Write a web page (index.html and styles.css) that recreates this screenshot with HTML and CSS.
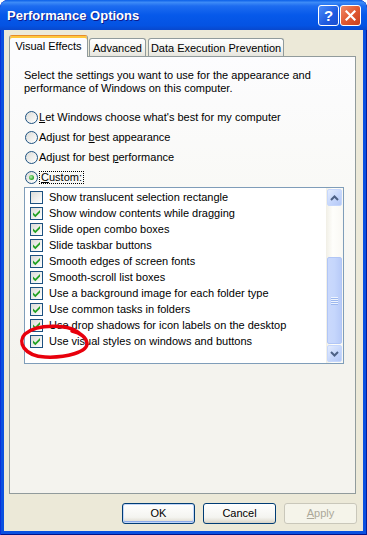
FILE: index.html
```html
<!DOCTYPE html>
<html lang="en">
<head>
    <meta charset="UTF-8">
    <title>Performance Options</title>
    <link rel="stylesheet" href="styles.css">
</head>
<body>
    <svg class="defs" width="0" height="0">
        <symbol id="chk" viewBox="0 0 11 11">
            <path d="M2 4.5 L4.3 6.8 L9 2.1 L9 4.5 L4.3 9.2 L2 6.9 Z" fill="#21A121"/>
        </symbol>
    </svg>
    <div class="window">
        <div class="titlebar">
            <span class="title">Performance Options</span>
            <div class="caption-buttons">
                <span class="cap-btn help">?</span>
                <span class="cap-btn close">
                    <svg width="11" height="11" viewBox="0 0 11 11">
                        <path d="M1.5 1.5 L9.5 9.5 M9.5 1.5 L1.5 9.5" stroke="#fff" stroke-width="2.2" stroke-linecap="square"/>
                    </svg>
                </span>
            </div>
        </div>
        <div class="client">
            <div class="tabs">
                <span class="tab active">Visual Effects</span>
                <span class="tab adv">Advanced</span>
                <span class="tab dep">Data Execution Prevention</span>
            </div>
            <div class="panel">
                <p class="intro">Select the settings you want to use for the appearance and<br>performance of Windows on this computer.</p>
                <div class="radios">
                    <div class="radio-row"><span class="radio"></span><span><u>L</u>et Windows choose what's best for my computer</span></div>
                    <div class="radio-row"><span class="radio"></span><span>Adjust for <u>b</u>est appearance</span></div>
                    <div class="radio-row"><span class="radio"></span><span>Adjust for best <u>p</u>erformance</span></div>
                    <div class="radio-row"><span class="radio on"></span><span class="focus"><u>C</u>ustom:</span></div>
                </div>
                <div class="listbox">
                    <ul class="items">
                        <li><span class="check"></span>Show translucent selection rectangle</li>
                        <li><span class="check"><svg><use href="#chk"/></svg></span>Show window contents while dragging</li>
                        <li><span class="check"><svg><use href="#chk"/></svg></span>Slide open combo boxes</li>
                        <li><span class="check"><svg><use href="#chk"/></svg></span>Slide taskbar buttons</li>
                        <li><span class="check"><svg><use href="#chk"/></svg></span>Smooth edges of screen fonts</li>
                        <li><span class="check"><svg><use href="#chk"/></svg></span>Smooth-scroll list boxes</li>
                        <li><span class="check"><svg><use href="#chk"/></svg></span>Use a background image for each folder type</li>
                        <li><span class="check"><svg><use href="#chk"/></svg></span>Use common tasks in folders</li>
                        <li><span class="check"><svg><use href="#chk"/></svg></span>Use drop shadows for icon labels on the desktop</li>
                        <li><span class="check"><svg><use href="#chk"/></svg></span>Use visual styles on windows and buttons</li>
                    </ul>
                    <div class="scrollbar">
                        <span class="sb-btn">
                            <svg width="9" height="6" viewBox="0 0 9 6"><path d="M1 5 L4.5 1.5 L8 5" fill="none" stroke="#4D6185" stroke-width="2"/></svg>
                        </span>
                        <span class="sb-space"></span>
                        <span class="sb-thumb"><span class="grip"></span></span>
                        <span class="sb-btn">
                            <svg width="9" height="6" viewBox="0 0 9 6"><path d="M1 1 L4.5 4.5 L8 1" fill="none" stroke="#4D6185" stroke-width="2"/></svg>
                        </span>
                    </div>
                </div>
            </div>
            <div class="buttons">
                <span class="btn default">OK</span>
                <span class="btn">Cancel</span>
                <span class="btn disabled"><u>A</u>pply</span>
            </div>
        </div>
        <!-- red marker drawn over the screenshot -->
        <svg class="scribble" width="367" height="535" viewBox="0 0 367 535">
            <path d="M81 335 C72 324, 38 323, 25 334 C17 342, 24 356, 45 357 C66 358, 88 352, 87 343 C86 337, 80 333, 72 331"
                  fill="none" stroke="#E8000C" stroke-width="3.5" stroke-linecap="round"/>
        </svg>
    </div>
</body>
</html>
```

FILE: styles.css
```css
* {
    box-sizing: border-box;
}

body {
    margin: 0;
    font-family: "Liberation Sans", Arial, sans-serif;
    font-size: 11px;
    line-height: 13px;
    color: #000;
    background: #fff;
}

svg.defs {
    position: absolute;
}

.window {
    position: relative;
    width: 367px;
    height: 535px;
    display: flex;
    flex-direction: column;
    background: #0A50E0;
    border-radius: 8px 8px 0 0;
    box-shadow: inset 1px 0 #0831D9, inset -1px 0 #001EA0, inset 0 -1px #00138C;
    overflow: hidden;
}

/* title bar */
.titlebar {
    height: 30px;
    flex: none;
    display: flex;
    align-items: center;
    padding: 0 6px 0 7px;
    border-radius: 8px 8px 0 0;
    background: linear-gradient(#0A5FE8 0%, #3D8BF7 8%, #1D6CF0 20%, #0659EA 50%, #0453E3 85%, #0848CD 100%);
}

.title {
    flex: 1;
    color: #fff;
    font-weight: bold;
    font-size: 13px;
    text-shadow: 1px 1px #0F1A8A;
}

.caption-buttons {
    display: flex;
    gap: 1px;
}

.cap-btn {
    width: 21px;
    height: 21px;
    border: 1px solid #fff;
    border-radius: 3px;
    display: flex;
    align-items: center;
    justify-content: center;
    color: #fff;
    font-weight: bold;
    font-size: 15px;
}

.cap-btn.help {
    background: linear-gradient(135deg, #4B8CF8, #1E5AE0 60%, #1B4FD0);
}

.cap-btn.close {
    background: linear-gradient(135deg, #F08A6A, #E15A32 50%, #C8401E);
}

/* client area */
.client {
    flex: 1;
    margin: 0 4px 4px;
    display: flex;
    flex-direction: column;
    background: #ECE9D8;
}

.tabs {
    height: 27px;
    flex: none;
    display: flex;
    align-items: flex-end;
    padding-left: 5px;
    margin-bottom: -1px;
    position: relative;
    z-index: 1;
}

.tab {
    height: 18px;
    margin-bottom: 1px;
    padding-top: 3px;
    border: 1px solid #919B9C;
    border-bottom: none;
    border-radius: 3px 3px 0 0;
    background: linear-gradient(#FFFFFF, #F3F3EF 60%, #E6E5DE);
    text-align: center;
}

.tab.active {
    width: 79px;
    height: 22px;
    margin-bottom: 0;
    padding-top: 4px;
    border-top-color: #E68B2C;
    box-shadow: inset 0 2px #FFC73C;
    background: #FCFCFE;
}

.tab.adv {
    width: 57px;
    margin-left: 1px;
}

.tab.dep {
    width: 136px;
    margin-left: 2px;
}

.panel {
    flex: 1;
    margin: 0 7px 0 5px;
    padding: 12px 11px 0 14px;
    border: 1px solid #919B9C;
    background: linear-gradient(#FCFCFE, #F9F9F6 30%, #F4F3EE 70%);
}

.intro {
    margin: 0;
}

.radios {
    margin-top: 12px;
}

.radio-row {
    height: 20px;
    display: flex;
    align-items: center;
    gap: 1px;
}

.radio {
    width: 13px;
    height: 13px;
    margin-left: 1px;
    border: 1px solid #1C5180;
    border-radius: 50%;
    background: linear-gradient(135deg, #DCDCD7, #FFFFFF);
    display: flex;
    align-items: center;
    justify-content: center;
}

.radio.on::after {
    content: "";
    width: 5px;
    height: 5px;
    border-radius: 50%;
    background: radial-gradient(circle at 40% 40%, #B8F0B0, #21A121 70%);
}

.focus {
    border: 1px dotted #000;
    line-height: 11px;
    padding: 0 1px;
}

/* list box */
.listbox {
    height: 177px;
    display: flex;
    border: 1px solid #7F9DB9;
    background: #fff;
}

.items {
    flex: 1;
    margin: 0;
    padding: 1px 0 0 5px;
    list-style: none;
}

.items li {
    height: 16px;
    display: flex;
    align-items: center;
    gap: 6px;
    white-space: nowrap;
}

.check {
    width: 13px;
    height: 13px;
    flex: none;
    border: 1px solid #1C5180;
    background: linear-gradient(135deg, #DCDCD7, #FFFFFF);
}

.check svg {
    display: block;
    width: 11px;
    height: 11px;
}

.scrollbar {
    width: 17px;
    display: flex;
    flex-direction: column;
    background: linear-gradient(90deg, #F1EFE6, #FEFEFB 40%, #F9F8F3);
}

.sb-btn {
    height: 17px;
    flex: none;
    margin: 1px;
    border: 1px solid #C6D7FC;
    border-radius: 2px;
    background: linear-gradient(135deg, #E3ECFE, #C4D5FB 60%, #B4C8F6);
    display: flex;
    align-items: center;
    justify-content: center;
}

.sb-space {
    flex: 1;
}

.sb-thumb {
    height: 87px;
    flex: none;
    margin: 0 1px;
    border: 1px solid #B1C6F6;
    border-radius: 2px;
    background: linear-gradient(90deg, #CAD9FC, #C5D6FC 50%, #B8CBF8);
    display: flex;
    align-items: center;
    justify-content: center;
}

.grip {
    width: 7px;
    height: 8px;
    background: repeating-linear-gradient(#EEF4FE 0 1px, #9CB7EE 1px 2px);
}

/* dialog buttons */
.buttons {
    flex: none;
    display: flex;
    justify-content: flex-end;
    gap: 8px;
    padding: 9px 6px 7px 0;
}

.btn {
    width: 73px;
    height: 21px;
    border: 1px solid #003C74;
    border-radius: 3px;
    background: linear-gradient(#FFFFFF, #F4F4F0 70%, #E3E0D6 90%, #D6D0C5);
    display: flex;
    align-items: center;
    justify-content: center;
}

.btn.default {
    box-shadow: inset 0 0 0 1px #C2D6F8, inset 0 -1px 0 1px #8DABEA;
}

.btn.disabled {
    border-color: #C9C7BA;
    background: #F5F4EA;
    color: #ACA899;
}

.scribble {
    position: absolute;
    left: 0;
    top: 0;
    pointer-events: none;
}
```
